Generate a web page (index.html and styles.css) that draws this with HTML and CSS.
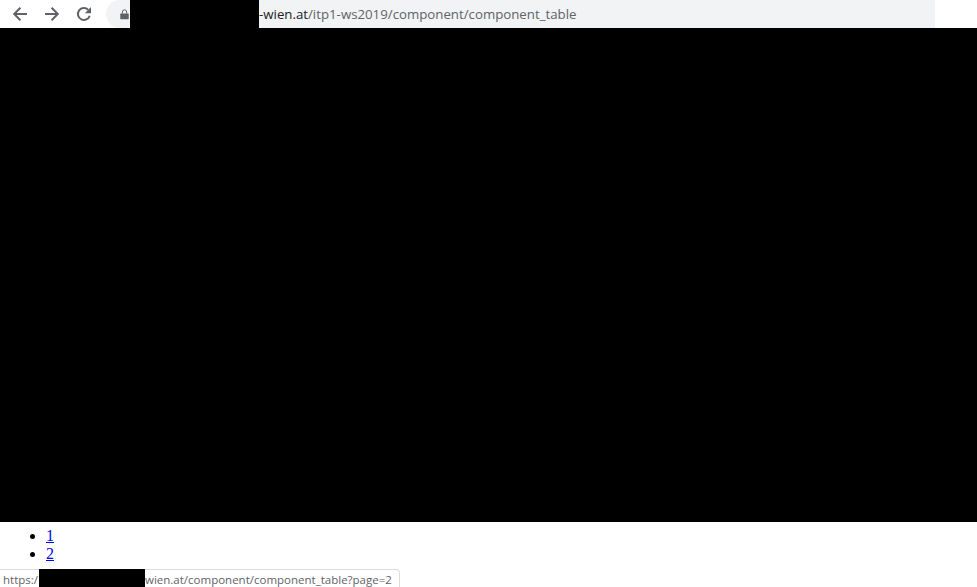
FILE: index.html
```html
<!DOCTYPE html>
<html lang="en">
<head>
<meta charset="utf-8">
<title>component_table</title>
<link rel="stylesheet" href="styles.css">
</head>
<body>
<header class="toolbar">
  <nav class="nav-buttons">
    <svg class="nav-icon" viewBox="0 0 16 16"><path d="M15 8H2.5M8.4 1.8 2.2 8l6.2 6.2" fill="none" stroke="#5f6368" stroke-width="2"/></svg>
    <svg class="nav-icon" viewBox="0 0 16 16"><path d="M1 8h12.5M7.6 1.8 13.8 8l-6.2 6.2" fill="none" stroke="#5f6368" stroke-width="2"/></svg>
    <svg class="nav-icon" viewBox="0 0 16 16"><path d="M13.7 9.7A6 6 0 1 1 12.2 3.7" fill="none" stroke="#5f6368" stroke-width="2"/><path d="M15 1v6.2H8.8z" fill="#5f6368"/></svg>
  </nav>
  <div class="address">
    <svg class="lock" viewBox="0 0 10 12"><path d="M1 5h8a.7.7 0 0 1 .7.7v5a.7.7 0 0 1-.7.7H1a.7.7 0 0 1-.7-.7v-5A.7.7 0 0 1 1 5z" fill="#5f6368"/><path d="M2.6 5V3.2a2.4 2.4 0 0 1 4.8 0V5" fill="none" stroke="#5f6368" stroke-width="1.1"/></svg>
    <div class="redact-top"></div>
    <span class="url"><span class="host">-wien.at</span>/itp1-ws2019/component/component_table</span>
  </div>
</header>
<main>
  <div class="redact-main"></div>
  <ul class="pages">
    <li><a href="#">1</a></li>
    <li><a href="#">2</a></li>
  </ul>
</main>
<div class="status">
  <span>https:/</span>
  <div class="redact-status"></div>
  <span>wien.at/component/component_table?page=2</span>
</div>
</body>
</html>
```
FILE: styles.css
```css
html, body {
  margin: 0;
  padding: 0;
  height: 587px;
  overflow: hidden;
  background: #fff;
}
.toolbar {
  display: flex;
  height: 28px;
  font-family: "Open Sans", sans-serif;
}
.nav-buttons {
  display: flex;
  gap: 16px;
  width: 106px;
  padding-left: 12px;
  box-sizing: border-box;
  align-items: center;
}
.nav-icon {
  width: 16px;
  height: 16px;
}
.address {
  width: 829px;
  display: flex;
  align-items: center;
  background: #f1f3f4;
  border-radius: 14px 0 0 14px;
  padding-left: 14px;
  box-sizing: border-box;
}
.lock {
  width: 9px;
  height: 11px;
  flex: none;
}
.redact-top {
  width: 129px;
  height: 28px;
  background: #000;
  margin-left: 1px;
  flex: none;
}
.url {
  font-size: 13.25px;
  color: #5f6368;
  white-space: nowrap;
}
.host {
  color: #202124;
}
.redact-main {
  height: 494px;
  background: #000;
}
.pages {
  margin: 5px 0 0;
  padding-left: 46px;
  font-family: "Liberation Serif", serif;
  font-size: 16px;
  line-height: 18px;
}
.pages a {
  color: #0000ee;
}
.status {
  position: absolute;
  left: 0;
  bottom: 0;
  width: 400px;
  height: 18px;
  box-sizing: border-box;
  display: flex;
  align-items: center;
  padding: 2px 0 0 3px;
  background: #fff;
  border: 1px solid #dadce0;
  border-left: 0;
  border-bottom: 0;
  border-radius: 0 4px 0 0;
  font-family: "Open Sans", sans-serif;
  font-size: 11.5px;
  color: #5f6368;
  white-space: nowrap;
}
.redact-status {
  width: 106px;
  height: 19px;
  background: #000;
  margin: -3px 0 0 1px;
  flex: none;
}
```
